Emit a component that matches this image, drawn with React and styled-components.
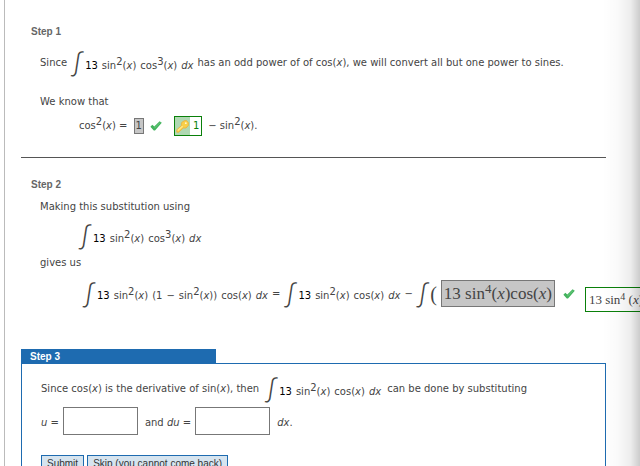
import React from "react";
import styled, { createGlobalStyle } from "styled-components";

const GlobalStyle = createGlobalStyle`
  * { box-sizing: border-box; }
  html, body { margin: 0; background: #fff; }
  body {
    font-family: "DejaVu Sans", Verdana, sans-serif;
    font-size: 10px;
    line-height: 14px;
    color: #444;
  }
`;

const Page = styled.main`
  position: relative;
  height: 100vh;
  margin-left: 4px;
  padding: 25px 34px 0 16px;
  border-left: 1px solid #bbb;
  overflow: hidden;
`;

const EdgeShadow = styled.div`
  position: absolute;
  top: 0;
  right: 0;
  bottom: 0;
  width: 38px;
  pointer-events: none;
  background: linear-gradient(
    to right,
    rgba(0, 0, 0, 0),
    rgba(0, 0, 0, 0.02) 40%,
    rgba(0, 0, 0, 0.07) 75%,
    rgba(0, 0, 0, 0.2)
  );
`;

const Step = styled.section`
  padding: 0 0 21px 19px;
  margin-bottom: 20px;
  border-bottom: 1px solid #555;
`;

const OpenStep = styled(Step)`
  margin-bottom: 0;
  padding-bottom: 37px;
  border-bottom: 0;
`;

const StepTitle = styled.h2`
  margin: 0 0 0 -9px;
  font: bold 10px/14px "Liberation Sans", Arial, sans-serif;
  color: #666;
`;

const Line = styled.p`
  margin: ${(p) => p.$top}px 0 0;
`;

const Row = styled.div`
  display: flex;
  align-items: center;
  gap: ${(p) => p.$gap || 4}px;
  min-height: ${(p) => p.$height || 28}px;
  margin-top: ${(p) => p.$top || 0}px;
  padding-left: ${(p) => p.$indent || 0}px;
  white-space: nowrap;
`;

const Formula = styled.span`
  display: flex;
  align-items: center;
  gap: 4px;
`;

const IntegralSign = styled.span`
  width: 10px;
  padding: 0 0 2px 3px;
  font: italic 300 26px/26px Roboto, "Open Sans", sans-serif;
`;

const Expr = styled.span`
  display: flex;
  gap: 4px;
  padding-top: 5px;
`;

const Coef = styled.span`
  color: #000;
`;

const Sup = styled.sup`
  font-size: 10px;
  line-height: 0;
  vertical-align: 4px;
`;

const Given = styled.span`
  display: inline-flex;
  align-items: center;
  justify-content: center;
  height: 16px;
  padding: 0 1px;
  border: 1px solid #777;
  background: #c6c6c6;
`;

const GivenFormula = styled(Given)`
  height: 27px;
  padding: 0 2px;
  margin-right: 4px;
  font: 17px/24px "Liberation Serif", "Times New Roman", serif;
`;

const FormulaSup = styled(Sup)`
  font-size: 13px;
  vertical-align: 6px;
`;

const Key = styled.span`
  display: inline-flex;
  height: 20px;
  margin-left: 6px;
  border: 1px solid #0a800a;
  color: #0a800a;
`;

const KeyIconBox = styled.span`
  display: flex;
  align-items: center;
  justify-content: center;
  width: 15px;
  background: #b0d8b2;
`;

const KeyValue = styled.span`
  padding: 2px 2px 0 3px;
`;

const KeyFormula = styled(Key)`
  align-items: center;
  height: 25px;
  margin-top: 12px;
  padding: 0 8px 0 3px;
  background: #fff;
  color: #444;
  font: 13px/20px "Liberation Serif", "Times New Roman", serif;
`;

const Paren = styled.span`
  font: 20px/26px "Liberation Serif", "Times New Roman", serif;
`;

const PanelTab = styled.div`
  width: 195px;
  height: 14px;
  padding-left: 9px;
  background: #1e6bb0;
`;

const PanelTitle = styled(StepTitle)`
  margin: 0;
  line-height: 16px;
  color: #fff;
`;

const Panel = styled.form`
  padding: 11px 19px 20px;
  border: 1px solid #1e6bb0;
`;

const Answer = styled.input`
  width: 75px;
  height: 28px;
  border: 1px solid #777;
  border-radius: 0;
  background: #fff;
  font: inherit;
`;

const Field = styled.label`
  display: flex;
  align-items: center;
  gap: 4px;
`;

const FieldText = styled.span`
  padding-top: 3px;
`;

const Button = styled.button`
  height: 18px;
  padding: 0 5px;
  border: 1px solid #1e6bb0;
  border-radius: 0;
  background: #d6e4ef;
  color: #333;
  font: 10px/14px "Liberation Sans", Arial, sans-serif;
`;

const CheckSvg = styled.svg`
  flex: none;
`;

function CheckIcon() {
  return (
    <CheckSvg width="12" height="10" viewBox="0 0 12 10" role="img" aria-label="Correct">
      <path d="M.4 5.8 2.3 3.8 4.3 5.6 9.6.3 11.8 1.8 5 9.6H3.8Z" fill="#43b35d" />
      <path d="M4.4 7.2 10.2 1.4" stroke="#6ccb80" strokeWidth="1" />
    </CheckSvg>
  );
}

function KeyIcon() {
  return (
    <svg width="13" height="13" viewBox="0 0 13 13" aria-hidden="true">
      <path
        d="M6.4 1.8 8.8.6H10.6L12.4 2.6V5.4L10 8H7.2L3.6 11.4 2.6 12.2H.8V9.8L5.4 5.6V3Z"
        fill="#f8cf48"
        stroke="#e8b040"
        strokeWidth=".8"
      />
      <path d="M1.8 10.6 6.6 6.2" stroke="#fde88a" strokeWidth="1.4" />
      <circle cx="9.8" cy="3.2" r=".9" fill="#fff6d0" />
    </svg>
  );
}

const Fn = ({ name, power }) => (
  <span>
    {name}
    {power && <Sup>{power}</Sup>}(<i>x</i>)
  </span>
);

const Integral = ({ children }) => (
  <Formula>
    <IntegralSign>∫</IntegralSign>
    <Expr>
      <Coef>13</Coef>
      {children}
      <i>dx</i>
    </Expr>
  </Formula>
);

export default function App() {
  return (
    <>
      <GlobalStyle />
      <Page>
        <Step>
          <StepTitle>Step 1</StepTitle>
          <Row $top={10}>
            <span>Since</span>
            <Integral>
              <Fn name="sin" power="2" />
              <Fn name="cos" power="3" />
            </Integral>
            <span>
              has an odd power of of <Fn name="cos" />, we will convert all but one power to sines.
            </span>
          </Row>
          <Line $top={18}>We know that</Line>
          <Row $top={7} $height={20} $indent={39} $gap={6}>
            <span>
              <Fn name="cos" power="2" /> =
            </span>
            <Given>1</Given>
            <CheckIcon />
            <Key>
              <KeyIconBox>
                <KeyIcon />
              </KeyIconBox>
              <KeyValue>1</KeyValue>
            </Key>
            <span>
              − <Fn name="sin" power="2" />.
            </span>
          </Row>
        </Step>

        <OpenStep>
          <StepTitle>Step 2</StepTitle>
          <Line $top={8}>Making this substitution using</Line>
          <Row $top={8} $indent={39}>
            <Integral>
              <Fn name="sin" power="2" />
              <Fn name="cos" power="3" />
            </Integral>
          </Row>
          <Line $top={6}>gives us</Line>
          <Row $top={5} $indent={43}>
            <Integral>
              <Fn name="sin" power="2" />
              <span>(1</span>
              <span>−</span>
              <span>
                <Fn name="sin" power="2" />)
              </span>
              <Fn name="cos" />
            </Integral>
            <span>=</span>
            <Integral>
              <Fn name="sin" power="2" />
              <Fn name="cos" />
            </Integral>
            <span>−</span>
            <IntegralSign>∫</IntegralSign>
            <Paren>(</Paren>
            <GivenFormula>
              <span>
                13 sin<FormulaSup>4</FormulaSup>(<i>x</i>)cos(<i>x</i>)
              </span>
            </GivenFormula>
            <CheckIcon />
            <KeyFormula>
              <span>
                13 sin<Sup>4</Sup> (<i>x</i>)
              </span>
            </KeyFormula>
          </Row>
        </OpenStep>

        <PanelTab>
          <PanelTitle>Step 3</PanelTitle>
        </PanelTab>
        <Panel onSubmit={(e) => e.preventDefault()}>
          <Row $gap={6}>
            <span>
              Since <Fn name="cos" /> is the derivative of <Fn name="sin" />, then
            </span>
            <Integral>
              <Fn name="sin" power="2" />
              <Fn name="cos" />
            </Integral>
            <span>can be done by substituting</span>
          </Row>
          <Row $top={4} $gap={7}>
            <Field>
              <FieldText>
                <i>u</i> =
              </FieldText>
              <Answer name="u" />
            </Field>
            <Field>
              <FieldText>
                and <i>du</i> =
              </FieldText>
              <Answer name="du" />
            </Field>
            <FieldText>
              <i>dx</i>.
            </FieldText>
          </Row>
          <Row $top={20} $height={18} $gap={3}>
            <Button type="submit">Submit</Button>
            <Button type="button">Skip (you cannot come back)</Button>
          </Row>
        </Panel>
        <EdgeShadow />
      </Page>
    </>
  );
}
